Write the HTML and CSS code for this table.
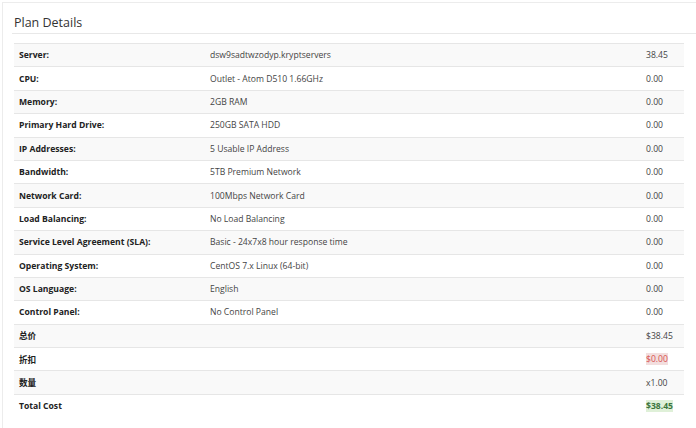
FILE: index.html
```html
<!DOCTYPE html>
<html>
<head>
<meta charset="utf-8">
<link rel="stylesheet" href="styles.css">
</head>
<body>
<div class="panel">
  <div class="panel-head">Plan Details</div>
  <table class="plan">
    <colgroup><col class="c-label"><col class="c-desc"><col class="c-amt"></colgroup>
    <tr><th>Server:</th><td>dsw9sadtwzodyp.kryptservers</td><td>38.45</td></tr>
    <tr><th>CPU:</th><td>Outlet - Atom D510 1.66GHz</td><td>0.00</td></tr>
    <tr><th>Memory:</th><td>2GB RAM</td><td>0.00</td></tr>
    <tr><th>Primary Hard Drive:</th><td>250GB SATA HDD</td><td>0.00</td></tr>
    <tr><th>IP Addresses:</th><td>5 Usable IP Address</td><td>0.00</td></tr>
    <tr><th>Bandwidth:</th><td>5TB Premium Network</td><td>0.00</td></tr>
    <tr><th>Network Card:</th><td>100Mbps Network Card</td><td>0.00</td></tr>
    <tr><th>Load Balancing:</th><td>No Load Balancing</td><td>0.00</td></tr>
    <tr><th>Service Level Agreement (SLA):</th><td>Basic - 24x7x8 hour response time</td><td>0.00</td></tr>
    <tr><th>Operating System:</th><td>CentOS 7.x Linux (64-bit)</td><td>0.00</td></tr>
    <tr><th>OS Language:</th><td>English</td><td>0.00</td></tr>
    <tr><th>Control Panel:</th><td>No Control Panel</td><td>0.00</td></tr>
    <tr><th>总价</th><td></td><td>$38.45</td></tr>
    <tr><th>折扣</th><td></td><td><span class="neg">$0.00</span></td></tr>
    <tr><th>数量</th><td></td><td>x1.00</td></tr>
    <tr><th>Total Cost</th><td></td><td><span class="pos">$38.45</span></td></tr>
  </table>
</div>
</body>
</html>
```
FILE: styles.css
```css
html, body {
  margin: 0;
  padding: 0;
  background: #fff;
}
body {
  font-family: "Open Sans", "Noto Sans CJK SC", sans-serif;
  color: #333;
  padding: 2px 0 0 2px;
}
.panel {
  border-top: 1px solid #ececec;
  border-left: 1px solid #ececec;
  padding: 0 0 0 11px;
  height: 430px;
  box-sizing: border-box;
}
.panel-head {
  font-size: 12.5px;
  color: #333;
  padding: 11px 0 0 2px;
  height: 19px;
  border-bottom: 1px solid #e8e8e8;
  margin-left: -2px;
  margin-bottom: 9px;
}
.plan {
  width: 670px;
  table-layout: fixed;
  border-collapse: collapse;
  font-size: 8.6px;
  border-top: 1px solid #e6e6e6;
}
.c-label { width: 196px; }
.c-desc { width: 436px; }
.c-amt { width: 38px; }
.plan tr {
  height: 23.4px;
  border-bottom: 1px solid #e6e6e6;
}
.plan tr:nth-child(odd) {
  background: #f9f9f9;
}
.plan tr:last-child {
  background: #fff;
  border-bottom: none;
}
.plan th {
  text-align: left;
  font-weight: 700;
  padding: 0 0 0 5px;
  color: #222;
  white-space: nowrap;
}
.plan td {
  padding: 0;
  color: #444;
  white-space: nowrap;
}
.neg {
  background: #f2dede;
  color: #d9534f;
}
.pos {
  background: #dff0d8;
  color: #3c763d;
  font-weight: 700;
}
```
